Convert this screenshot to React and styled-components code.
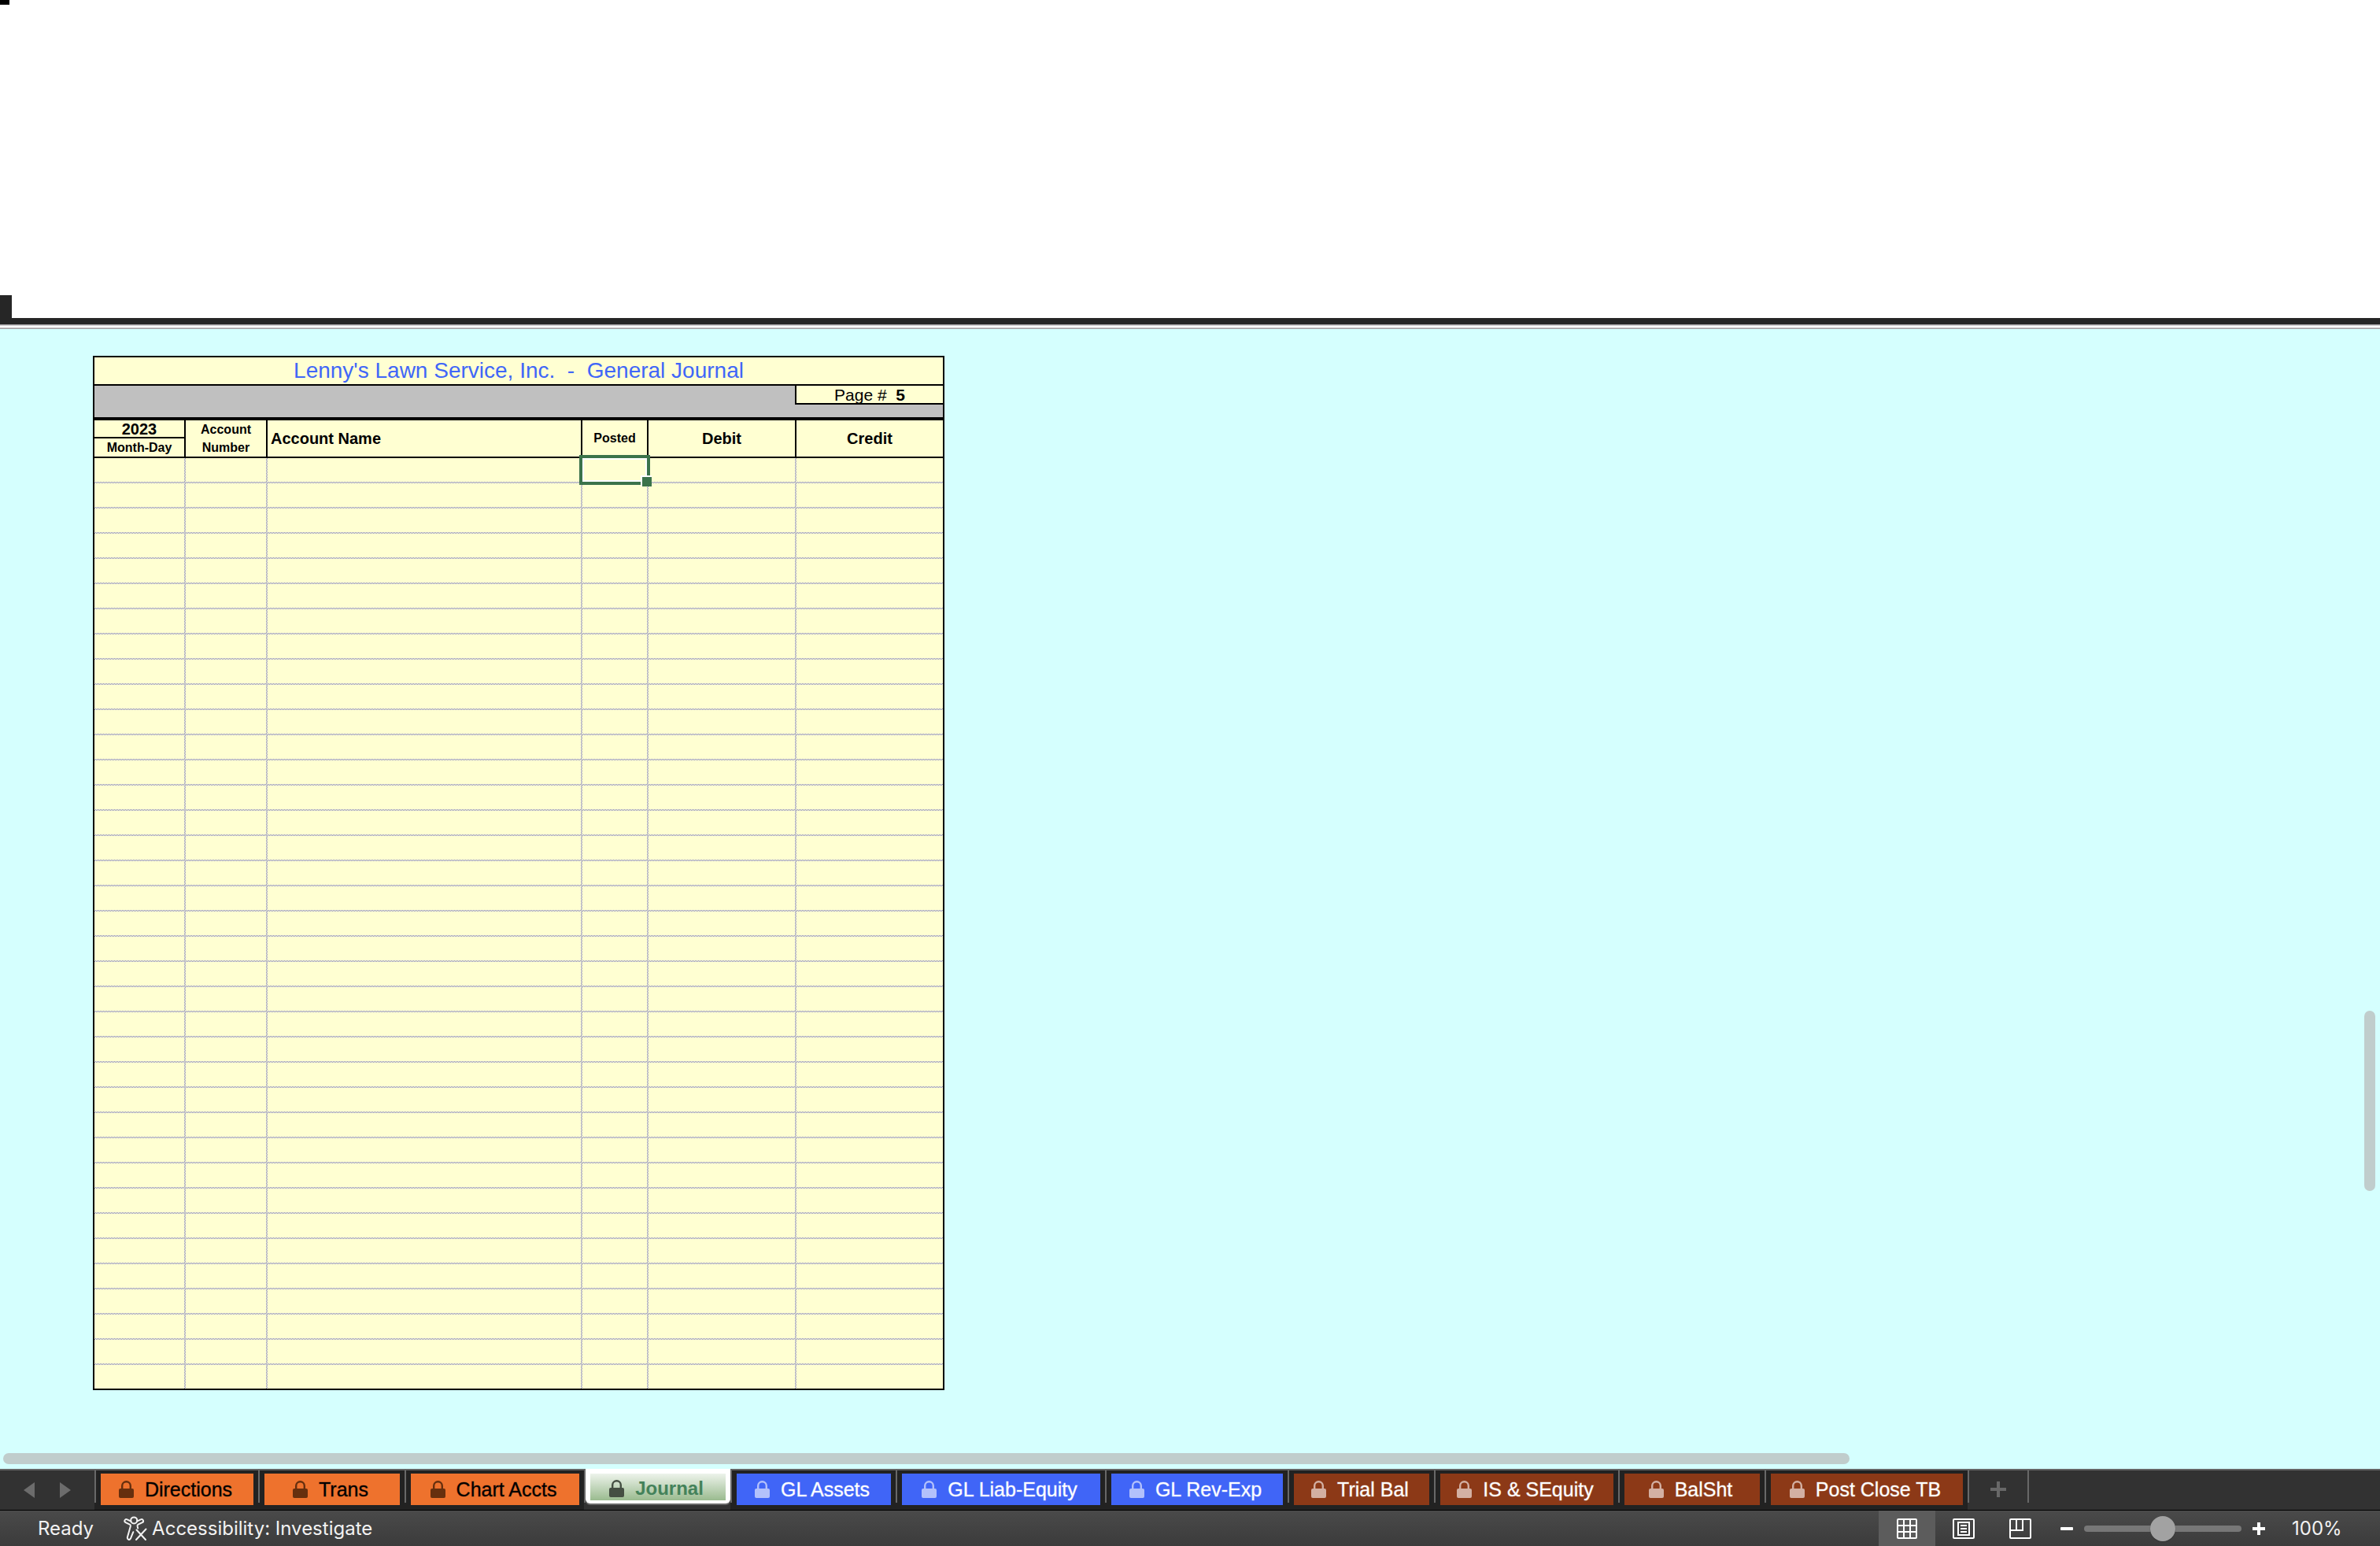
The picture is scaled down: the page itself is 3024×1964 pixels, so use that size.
import { useState } from 'react';
import styled, { createGlobalStyle, css } from 'styled-components';

const GlobalStyle = createGlobalStyle`
    * {
        box-sizing: border-box;
    }

    body {
        margin: 0;
        background: #ffffff;
        font-family: "Liberation Sans", Arial, sans-serif;
    }

    button {
        margin: 0;
        padding: 0;
        border: 0;
        background: none;
        color: inherit;
        font: inherit;
    }
`;

const Page = styled.div`
    display: flex;
    flex-direction: column;
    min-height: 100vh;
`;

const TopArea = styled.header`
    display: flex;
    flex-direction: column;
    justify-content: space-between;
    height: 404px;
`;

const Mark = styled.div`
    width: ${({ $width }) => $width}px;
    height: ${({ $height }) => $height}px;
    background: ${({ $color }) => $color};
`;

const RibbonEdge = styled.div`
    height: 14px;
    border-top: 8px solid #262626;
    background: linear-gradient(#a3a0a3 0 1px, #d0ced0 1px 2px, #ffffff 2px 4px, #c9c4c6 4px 5px, #a3a0a3 5px 6px);
`;

const Sheet = styled.main`
    position: relative;
    flex: 1;
    padding: 34px 118px 100px;
    background: #d5fffe;
`;

const VerticalThumb = styled.div`
    position: absolute;
    top: 866px;
    right: 6px;
    width: 14px;
    height: 229px;
    border-radius: 7px;
    background: #c0cdcc;
`;

const HorizontalThumb = styled.div`
    position: absolute;
    bottom: 6px;
    left: 4px;
    right: 674px;
    height: 14px;
    border-radius: 7px;
    background: #c0cdcc;
`;

const JournalTable = styled.table`
    width: 1082px;
    table-layout: fixed;
    border-collapse: separate;
    border-spacing: 0;
    border-left: 2px solid #000000;
    border-top: 2px solid #000000;
    background: #ffffd2;
    color: #000000;
`;

const TitleCell = styled.th`
    height: 36px;
    padding: 0;
    border-right: 2px solid #000000;
    border-bottom: 2px solid #000000;
    color: #4066f8;
    font-size: 28px;
    font-weight: 400;
    line-height: 34px;
    white-space: pre;
`;

const BandCell = styled.td`
    height: ${({ $height }) => $height}px;
    padding: 0;
    background: #c0c0c0;
    border-right: 2px solid #000000;
    border-bottom: ${({ $thick }) => ($thick ? '4px solid #000000' : '0')};
`;

const PageCell = styled.td`
    height: 24px;
    padding: 0;
    border-right: 2px solid #000000;
    border-bottom: 2px solid #000000;
    font-size: 21px;
    line-height: 22px;
    text-align: center;
    white-space: pre;
`;

const PageText = styled.div`
    height: 22px;
    padding-top: 1px;
    overflow: hidden;
`;

const HeadCell = styled.th`
    height: ${({ $height }) => $height}px;
    padding: 0 4px;
    border-right: 2px solid #000000;
    border-bottom: ${({ $open }) => ($open ? '0' : '2px solid #000000')};
    font-size: ${({ $small }) => ($small ? 16 : 20)}px;
    line-height: 20px;
    text-align: ${({ $align }) => $align || 'center'};
`;

const checker = 'conic-gradient(#9090a0 25%, #f8f8f4 0 50%, #9090a0 0 75%, #f8f8f4 0)';

const Cell = styled.td`
    height: 32px;
    padding: 0;
    background:
        ${checker} right top / 2px 2px repeat-y,
        ${checker} left bottom / 2px 2px repeat-x;

    &:last-child {
        border-right: 2px solid #000000;
        background: ${checker} left bottom / 2px 2px repeat-x;
    }

    tr:last-child & {
        border-bottom: 2px solid #000000;
        background: ${checker} right top / 2px 2px repeat-y;
    }

    tr:last-child &:last-child {
        background: none;
    }
`;

const SelectedCell = styled(Cell)`
    position: relative;
`;

const Selection = styled.div`
    position: absolute;
    inset: -4px -2px -2px -4px;
    border: 4px solid #3b734b;
    box-shadow: inset 0 0 0 2px #ffffff;

    &::after {
        content: '';
        position: absolute;
        right: -6px;
        bottom: -6px;
        width: 12px;
        height: 12px;
        border-top: 2px solid #ffffff;
        border-left: 2px solid #ffffff;
        background: #3b734b;
    }
`;

const TabBar = styled.nav`
    display: flex;
    height: 52px;
    border-top: 2px solid #656565;
    background: #323232;
`;

const NavArrows = styled.div`
    display: flex;
    align-items: center;
    gap: 32px;
    width: 120px;
    padding: 0 30px 0;

    svg {
        display: block;
        fill: #6c6c6c;
    }
`;

const Divider = styled.span`
    width: 2px;
    height: 41px;
    background: #686868;
`;

const TabSlot = styled.div`
    display: flex;
    align-items: flex-start;
    height: 50px;
    background: #222222;
`;

const ActiveSlot = styled(TabSlot)`
    background: #323232;
`;

const tabColors = {
    orange: { background: '#ee722d', color: '#000000', lock: '#662f0e' },
    blue: { background: '#4065f7', color: '#ffffff', lock: '#b3c1fb' },
    brown: { background: '#8c3917', color: '#ffffff', lock: '#d3b0a3' },
    green: { background: 'linear-gradient(#edf3eb, #9abb8f)', color: '#44825a', lock: '#454f43' },
};

const Tab = styled.button`
    display: flex;
    align-items: center;
    justify-content: center;
    gap: 14px;
    width: ${({ $width }) => $width}px;
    height: 40px;
    margin: 4px 6px 6px;
    padding-right: 4px;
    background: ${({ $tone }) => tabColors[$tone].background};
    color: ${({ $tone }) => tabColors[$tone].color};
    font-size: 25px;
    line-height: 38px;
    white-space: nowrap;
    -webkit-text-stroke: 1px color-mix(in srgb, currentColor 35%, transparent);

    svg {
        flex: none;
        color: ${({ $tone }) => tabColors[$tone].lock};
    }

    ${({ $active }) =>
        $active &&
        css`
            height: 34px;
            padding-top: 4px;
            font-weight: 700;
            font-size: 24px;
            line-height: 30px;
            -webkit-text-stroke: 0;
        `}
`;

const ActiveFrame = styled.div`
    height: 44px;
    margin-top: -2px;
    padding-top: 2px;
    border-radius: 0 0 6px 6px;
    background: #ffffff;
    box-shadow: 0 2px 0 #686868;
`;

const AddTab = styled.button`
    width: 74px;
    height: 50px;
    padding-bottom: 2px;
    color: #686868;

    svg {
        display: block;
        margin: 0 auto;
    }
`;

const StatusBar = styled.footer`
    display: flex;
    align-items: center;
    height: 46px;
    padding: 0 50px 0 48px;
    border-top: 1px solid #000000;
    background: linear-gradient(#4a4a4a, #3b3b3b);
    color: #f2f2f2;
    font-family: Inter, sans-serif;
    font-size: 24px;
    line-height: 32px;
`;

const AccessibilityButton = styled.button`
    display: flex;
    align-items: center;
    gap: 6px;
    margin-left: 38px;
`;

const ViewButtons = styled.div`
    display: flex;
    margin-left: auto;
`;

const ViewButton = styled.button`
    display: flex;
    align-items: center;
    justify-content: center;
    width: 72px;
    height: 45px;
    background: ${({ $active }) => ($active ? '#5c5c5c' : 'transparent')};
`;

const Zoom = styled.div`
    display: flex;
    align-items: center;
    gap: 14px;
    margin-left: 15px;

    svg {
        display: block;
    }
`;

const ZoomSlider = styled.input`
    width: 200px;
    height: 32px;
    margin: 0;
    appearance: none;
    background: transparent;

    &::-webkit-slider-runnable-track {
        height: 8px;
        border-radius: 4px;
        background: #777777;
    }

    &::-webkit-slider-thumb {
        width: 32px;
        height: 32px;
        margin-top: -12px;
        appearance: none;
        border-radius: 50%;
        background: #a2a2a2;
        box-shadow: 0 1px 1px #333333;
    }
`;

const ZoomValue = styled.output`
    width: 62px;
    margin-left: 34px;
    text-align: right;
`;

const LockIcon = () => (
    <svg width="19" height="22" viewBox="0 0 19 22" aria-hidden="true">
        <path d="M4.2 11V6.6a5.3 5.3 0 0 1 10.6 0V11" fill="none" stroke="currentColor" strokeWidth="2.4" />
        <rect x="0" y="10" width="19" height="12" rx="2" fill="currentColor" />
    </svg>
);

const AccessibilityIcon = () => (
    <svg
        width="30"
        height="32"
        viewBox="0 0 30 32"
        fill="none"
        stroke="currentColor"
        strokeWidth="2"
        strokeLinecap="round"
        strokeLinejoin="round"
        aria-hidden="true"
    >
        <path d="M9.4 6.6 4.6 4.3C1.6 3 .2 7 2.600 8.200l5.200 2.500c1 .5 1.200 1.200 1 2.200L5 26.600c-.9 3.400 3 4.400 4.100 1.600l3.200-8" />
        <path d="M17 6.600l4.800-2.300c3-1.300 4.400 2.700 2 3.900l-5.200 2.500c-1 .5-1.200 1.200-1 2.200l.6 2.600" />
        <circle cx="13.200" cy="5.400" r="4" />
        <path d="M16.500 17.500 28 30M28.500 16.500 16 30" />
    </svg>
);

const NormalViewIcon = () => (
    <svg width="26" height="26" viewBox="0 0 26 26" fill="none" stroke="#ffffff" strokeWidth="2">
        <rect x="1" y="1" width="24" height="24" rx="1" />
        <path d="M9 1v24M17 1v24M1 9h24M1 17h24" />
    </svg>
);

const PageLayoutIcon = () => (
    <svg width="28" height="26" viewBox="0 0 28 26" fill="none" stroke="#ffffff" strokeWidth="2">
        <rect x="1" y="1" width="26" height="24" rx="1" />
        <rect x="7" y="5" width="14" height="16" />
        <path d="M10 9h8M10 13h8M10 17h8" />
    </svg>
);

const PageBreakIcon = () => (
    <svg width="28" height="26" viewBox="0 0 28 26" fill="none" stroke="#ffffff" strokeWidth="2">
        <rect x="1" y="1" width="26" height="24" rx="1" />
        <path d="M9 1v14M17 1v14M1 15h17" />
    </svg>
);

const views = [
    { name: 'Normal', Icon: NormalViewIcon },
    { name: 'Page Layout', Icon: PageLayoutIcon },
    { name: 'Page Break Preview', Icon: PageBreakIcon },
];

const tabs = [
    { name: 'Directions', tone: 'orange', width: 194 },
    { name: 'Trans', tone: 'orange', width: 172 },
    { name: 'Chart Accts', tone: 'orange', width: 214 },
    { name: 'Journal', tone: 'green', width: 172 },
    { name: 'GL Assets', tone: 'blue', width: 196 },
    { name: 'GL Liab-Equity', tone: 'blue', width: 252 },
    { name: 'GL Rev-Exp', tone: 'blue', width: 218 },
    { name: 'Trial Bal', tone: 'brown', width: 172 },
    { name: 'IS & SEquity', tone: 'brown', width: 220 },
    { name: 'BalSht', tone: 'brown', width: 172 },
    { name: 'Post Close TB', tone: 'brown', width: 244 },
];

const columnWidths = [116, 104, 400, 84, 188, 188];
const rows = Array.from({ length: 37 }, (_, i) => i);

const Journal = () => (
    <JournalTable>
        <colgroup>
            {columnWidths.map((width, i) => (
                <col key={i} width={width} />
            ))}
        </colgroup>
        <thead>
            <tr>
                <TitleCell colSpan={6}>{"Lenny's Lawn Service, Inc.  -  General Journal"}</TitleCell>
            </tr>
            <tr>
                <BandCell colSpan={5} $height={24} />
                <PageCell>
                    <PageText>
                        {'Page #  '}
                        <b>5</b>
                    </PageText>
                </PageCell>
            </tr>
            <tr>
                <BandCell colSpan={6} $height={20} $thick />
            </tr>
            <tr>
                <HeadCell $height={23}>2023</HeadCell>
                <HeadCell $height={23} $small $open>Account</HeadCell>
                <HeadCell rowSpan={2} $align="left">Account Name</HeadCell>
                <HeadCell rowSpan={2} $small>Posted</HeadCell>
                <HeadCell rowSpan={2}>Debit</HeadCell>
                <HeadCell rowSpan={2}>Credit</HeadCell>
            </tr>
            <tr>
                <HeadCell $height={25} $small>Month-Day</HeadCell>
                <HeadCell $height={25} $small>Number</HeadCell>
            </tr>
        </thead>
        <tbody>
            {rows.map((row) => (
                <tr key={row}>
                    {columnWidths.map((_, col) =>
                        row === 0 && col === 3 ? (
                            <SelectedCell key={col}>
                                <Selection />
                            </SelectedCell>
                        ) : (
                            <Cell key={col} />
                        )
                    )}
                </tr>
            ))}
        </tbody>
    </JournalTable>
);

const SheetTabs = () => {
    const [current, setCurrent] = useState('Journal');

    return (
        <TabBar>
            <NavArrows>
                <button aria-label="Previous sheet">
                    <svg width="14" height="20" viewBox="0 0 14 20"><path d="M14 0v20L0 10z" /></svg>
                </button>
                <button aria-label="Next sheet">
                    <svg width="14" height="20" viewBox="0 0 14 20"><path d="M0 0v20l14-10z" /></svg>
                </button>
            </NavArrows>
            {tabs.map(({ name, tone, width }) => {
                const active = name === current;
                const Slot = active ? ActiveSlot : TabSlot;
                const tab = (
                    <Tab $tone={tone} $width={width} $active={active} onClick={() => setCurrent(name)}>
                        <LockIcon />
                        {name}
                    </Tab>
                );

                return (
                    <Slot key={name}>
                        <Divider />
                        {active ? <ActiveFrame>{tab}</ActiveFrame> : tab}
                    </Slot>
                );
            })}
            <Divider />
            <AddTab aria-label="Add sheet">
                <svg width="20" height="20" viewBox="0 0 20 20" fill="currentColor">
                    <path d="M8 0h4v8h8v4h-8v8H8v-8H0V8h8z" />
                </svg>
            </AddTab>
            <Divider />
        </TabBar>
    );
};

const App = () => {
    const [view, setView] = useState('Normal');
    const [zoom, setZoom] = useState(100);

    return (
        <Page>
            <GlobalStyle />
            <TopArea>
                <Mark $width={12} $height={6} $color="#000000" />
                <Mark $width={15} $height={29} $color="#262626" />
            </TopArea>
            <RibbonEdge />
            <Sheet>
                <Journal />
                <VerticalThumb />
                <HorizontalThumb />
            </Sheet>
            <SheetTabs />
            <StatusBar>
                <span>Ready</span>
                <AccessibilityButton>
                    <AccessibilityIcon />
                    Accessibility: Investigate
                </AccessibilityButton>
                <ViewButtons>
                    {views.map(({ name, Icon }) => (
                        <ViewButton key={name} aria-label={name} $active={name === view} onClick={() => setView(name)}>
                            <Icon />
                        </ViewButton>
                    ))}
                </ViewButtons>
                <Zoom>
                    <button aria-label="Zoom out" onClick={() => setZoom(Math.max(0, zoom - 10))}>
                        <svg width="16" height="16" viewBox="0 0 16 16" fill="#ffffff">
                            <rect y="6" width="16" height="4" rx="1" />
                        </svg>
                    </button>
                    <ZoomSlider
                        type="range"
                        aria-label="Zoom"
                        min="0"
                        max="200"
                        value={zoom}
                        onChange={(e) => setZoom(Number(e.target.value))}
                    />
                    <button aria-label="Zoom in" onClick={() => setZoom(Math.min(200, zoom + 10))}>
                        <svg width="16" height="16" viewBox="0 0 16 16" fill="#ffffff">
                            <path d="M6 0h4v6h6v4h-6v6H6v-6H0V6h6z" />
                        </svg>
                    </button>
                </Zoom>
                <ZoomValue>{zoom}%</ZoomValue>
            </StatusBar>
        </Page>
    );
};

export default App;
